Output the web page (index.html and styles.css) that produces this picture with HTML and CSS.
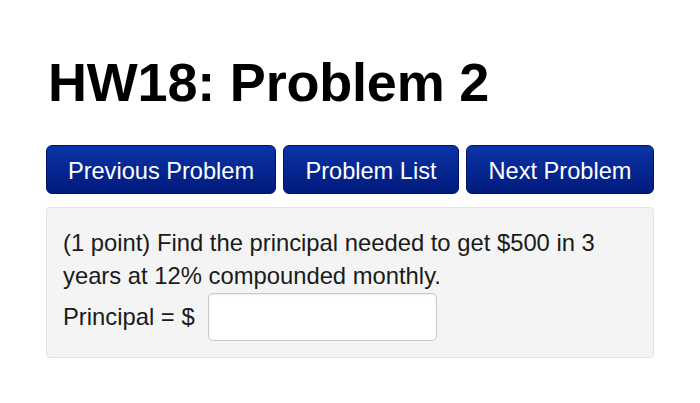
FILE: index.html
```html
<!DOCTYPE html>
<html>
<head>
<meta charset="utf-8">
<link rel="stylesheet" href="styles.css">
</head>
<body>
<div class="page">
  <h1 class="title">HW18: Problem 2</h1>
  <div class="nav">
    <a class="btn btn-prev">Previous Problem</a>
    <a class="btn btn-list">Problem List</a>
    <a class="btn btn-next">Next Problem</a>
  </div>
  <div class="well">
    <p class="text">(1 point) Find the principal needed to get $500 in 3 years at 12% compounded monthly.</p>
    <div class="answer">
      <span class="label">Principal = $</span>
      <span class="input"></span>
    </div>
  </div>
</div>
</body>
</html>
```
FILE: styles.css
```css
html, body {
  margin: 0;
  padding: 0;
  background: #fff;
}
.page {
  padding: 0 46px;
  font-family: "Liberation Sans", Arial, Helvetica, sans-serif;
  color: #222;
}
.title {
  margin: 0;
  padding-top: 50px;
  font-size: 54px;
  line-height: 64px;
  font-weight: bold;
  color: #000;
  letter-spacing: -0.2px;
  padding-left: 2px;
}
.nav {
  display: flex;
  gap: 7px;
  margin-top: 31px;
}
.btn {
  display: block;
  height: 49px;
  box-sizing: border-box;
  padding: 2px 0 0;
  line-height: 47px;
  font-size: 23.6px;
  color: #fff;
  background: linear-gradient(#0b34a6, #001a7c);
  border: 1px solid #00146a;
  border-radius: 6px;
  text-align: center;
}
.btn-prev { width: 230px; }
.btn-list { width: 176px; }
.btn-next { width: 188px; }
.well {
  margin-top: 13px;
  width: 608px;
  box-sizing: border-box;
  background: #f4f4f4;
  border: 1px solid #e2e2e2;
  border-radius: 4px;
  padding: 18px 16px 16px 16px;
}
.text {
  margin: 0;
  font-size: 23.8px;
  line-height: 33px;
  color: #1a1a1a;
  padding-right: 20px;
}
.answer {
  display: flex;
  align-items: center;
  margin-top: 1px;
  font-size: 23.8px;
  color: #1a1a1a;
}
.label {
  margin-right: 13px;
}
.input {
  display: block;
  width: 229px;
  height: 48px;
  box-sizing: border-box;
  background: #fff;
  border: 1px solid #c8c8c8;
  border-radius: 5px;
  box-shadow: inset 0 1px 2px rgba(0,0,0,0.08);
}
```
